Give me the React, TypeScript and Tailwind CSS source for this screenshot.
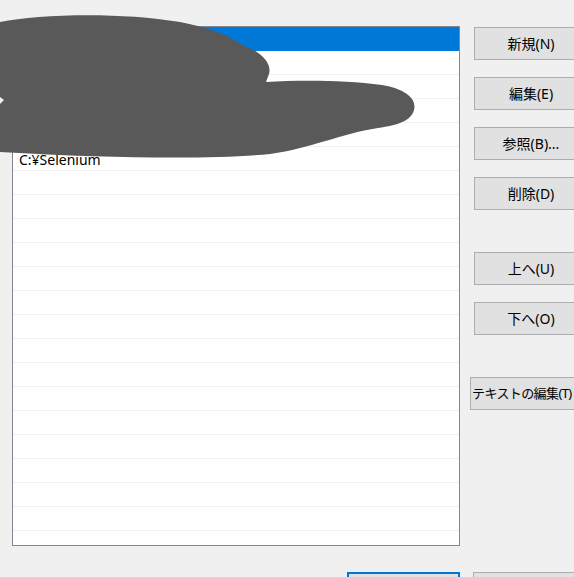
import React from "react";

const rows = Array.from({ length: 22 }, (_, i) => i);

const sideButtons = [
  { label: "新規(N)", mt: "mt-0" },
  { label: "編集(E)", mt: "mt-[17px]" },
  { label: "参照(B)...", mt: "mt-[17px]" },
  { label: "削除(D)", mt: "mt-[17px]" },
  { label: "上へ(U)", mt: "mt-[42px]" },
  { label: "下へ(O)", mt: "mt-[17px]" },
];

function Scribble() {
  return (
    <svg
      className="pointer-events-none absolute left-0 top-0"
      width="430"
      height="170"
      viewBox="0 0 430 170"
    >
      <path
        fill="#595959"
        d="M0,22 C40,14 120,12 180,22 C212,28 232,37 244,46 C262,52 272,64 269,74 L266,82 C300,80 345,80 382,85 C406,89 417,99 414,110 C411,121 398,125 378,128 C340,134 312,148 270,154 C220,159 120,159 0,152 L0,104 L4,100 L0,97 Z"
      />
    </svg>
  );
}

export default function App() {
  return (
    <div
      className="relative h-[577px] w-[574px] overflow-hidden bg-[#f0f0f0] text-black"
      style={{ fontFamily: '"Noto Sans", "Noto Sans CJK JP", sans-serif' }}
    >
      <div className="flex pl-[12px] pt-[26px]">
        <div className="h-[520px] w-[448px] shrink-0 overflow-hidden border border-[#828790] bg-white">
          {rows.map((i) => (
            <div
              key={i}
              className={
                i === 0
                  ? "h-[24px] bg-[#0078d7]"
                  : "flex h-[24px] items-center border-b border-[#f0f0f0] pl-[6px] pt-[2px] text-[14px] leading-none"
              }
            >
              {i === 5 ? "C:¥Selenium" : ""}
            </div>
          ))}
        </div>

        <div className="ml-[14px] flex shrink-0 flex-col pt-px">
          {sideButtons.map((b) => (
            <button
              key={b.label}
              className={`${b.mt} flex h-[33px] w-[114px] items-center justify-center border border-[#adadad] bg-[#e1e1e1] text-[14px]`}
            >
              {b.label}
            </button>
          ))}
          <button className="-ml-[4px] mt-[42px] flex h-[33px] w-[118px] items-center justify-start whitespace-nowrap border border-[#adadad] bg-[#e1e1e1] pl-px text-[13px] tracking-[-0.6px]">
            テキストの編集(T)
          </button>
        </div>
      </div>

      <div className="mt-[26px] flex gap-[13px] pl-[347px]">
        <button className="h-[24px] w-[113px] shrink-0 border-2 border-[#0078d7] bg-[#e1e1e1] text-[14px]">
          OK
        </button>
        <button className="h-[24px] w-[114px] shrink-0 border border-[#adadad] bg-[#e1e1e1] text-[14px]">
          キャンセル
        </button>
      </div>

      <Scribble />
    </div>
  );
}
